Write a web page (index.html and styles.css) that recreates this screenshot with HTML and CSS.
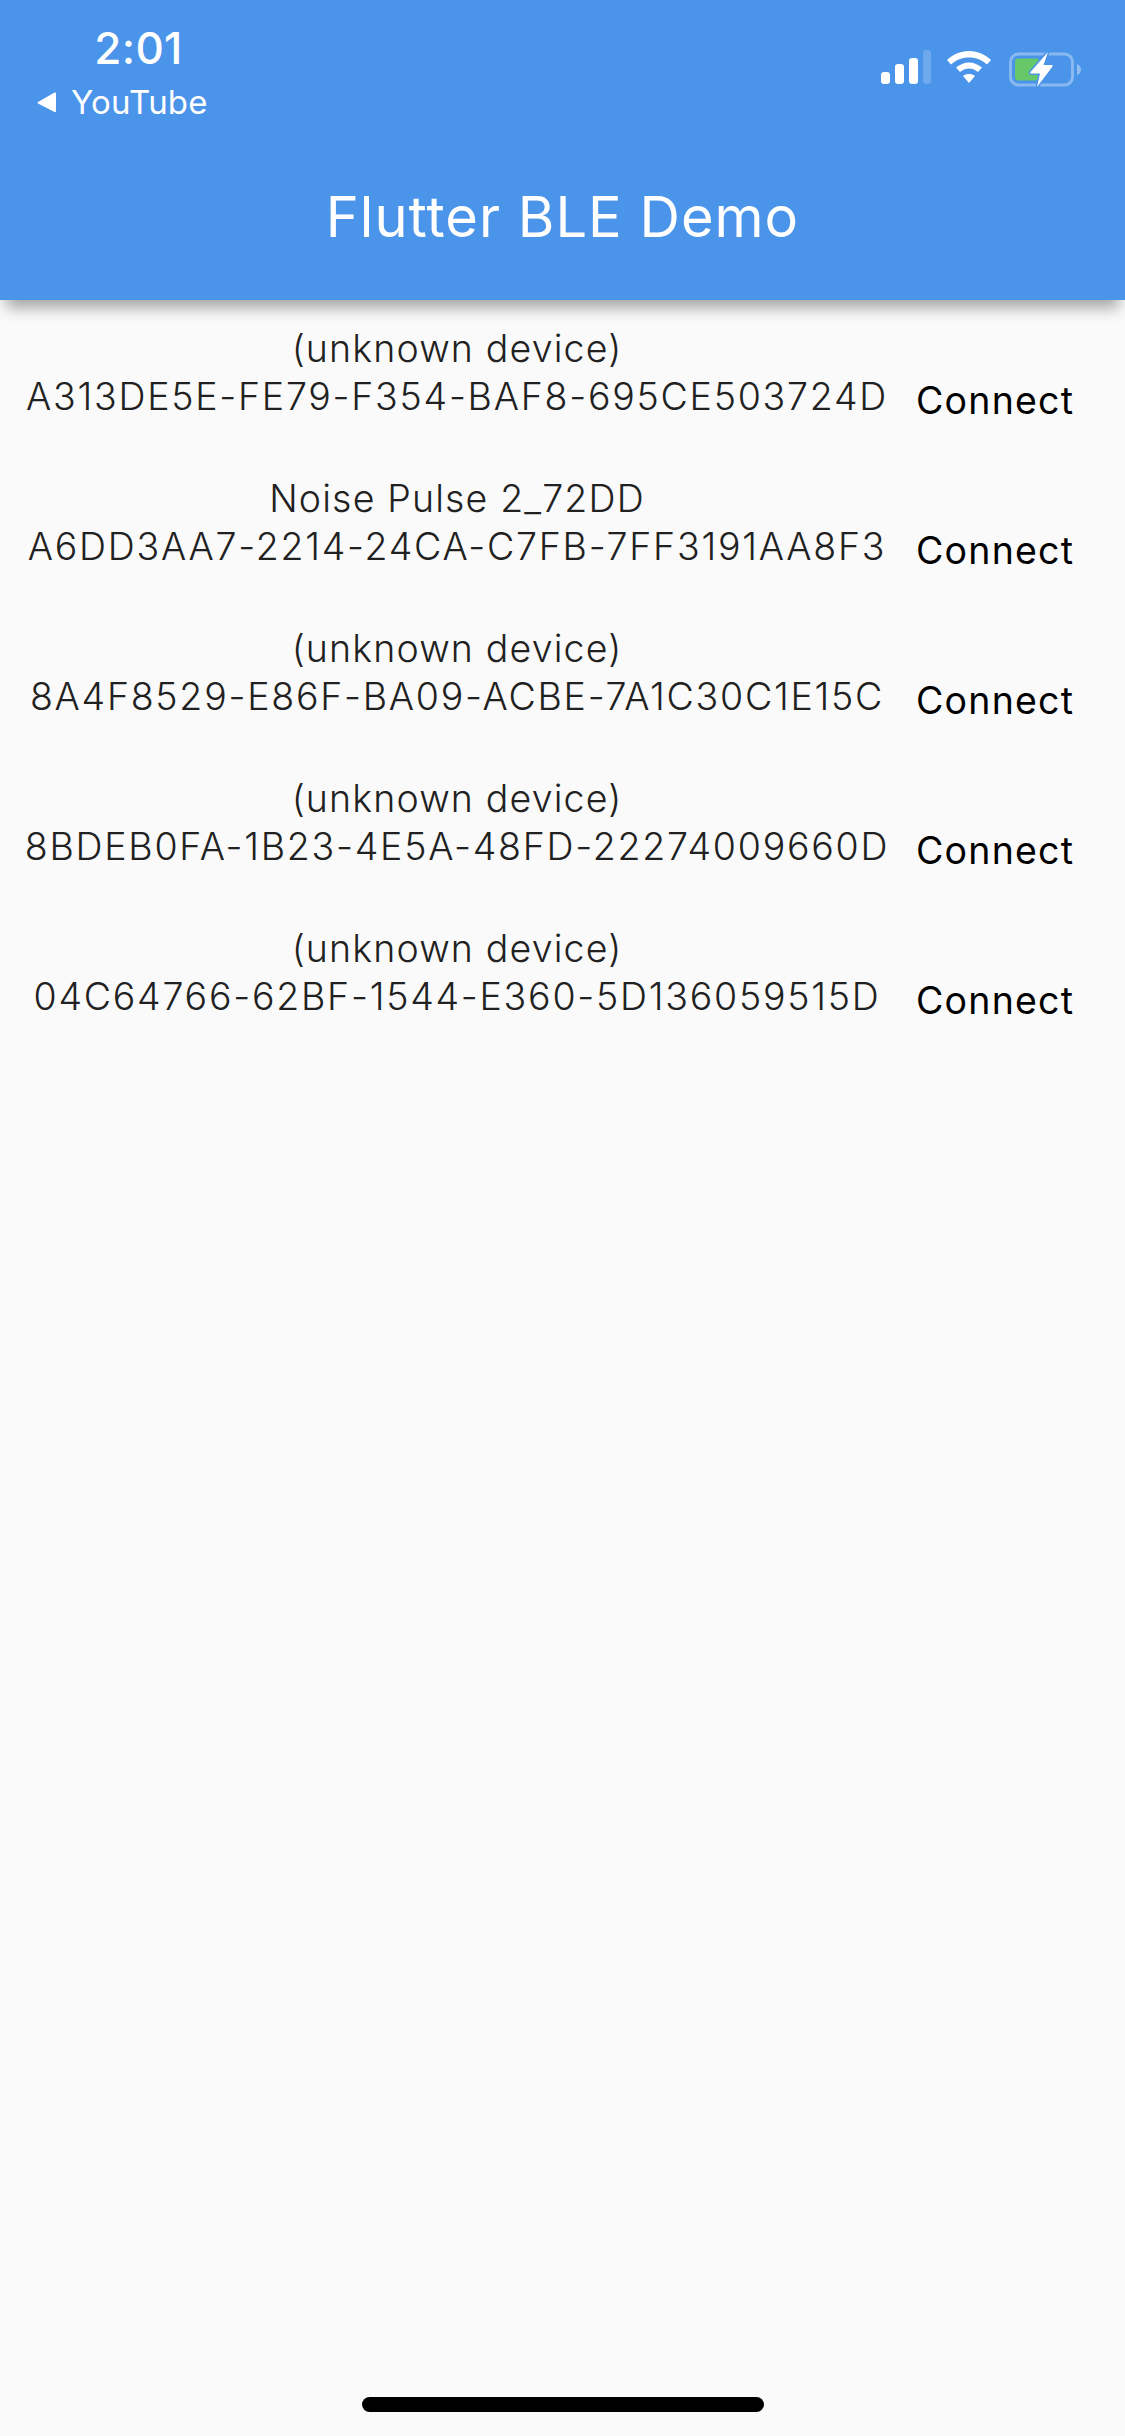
FILE: index.html
```html
<!DOCTYPE html>
<html lang="en">
<head>
<meta charset="utf-8">
<title>Flutter BLE Demo</title>
<link rel="stylesheet" href="styles.css">
</head>
<body>
<div class="screen">
  <header class="appbar">
    <div class="status">
      <div class="status-left">
        <div class="time">2:01</div>
        <div class="back"><svg class="back-arrow" viewBox="0 0 22 22" width="22" height="22"><path d="M20 2.500 L20 20 Q20 21.500 18.500 21 L2 12.600 Q1 12 2 11 L18.500 1.600 Q20 1 20 2.500Z" fill="#fff"/></svg><span>YouTube</span></div>
      </div>
      <div class="status-right">
        <svg width="52" height="36" viewBox="0 0 52 36"><rect x="2" y="22" width="9" height="12" rx="3" fill="#fff"/><rect x="16" y="14" width="9" height="20" rx="3" fill="#fff"/><rect x="30" y="8" width="9" height="26" rx="3" fill="#fff"/><rect x="44" y="0" width="8" height="34" rx="3" fill="#fff" fill-opacity=".2"/></svg>
        <svg class="wifi" width="46" height="34" viewBox="0 0 46 34"><path d="M23 1C32 1 39 4.500 45 10L41 14.500C36 10 30 7.500 23 7.500C16 7.500 10 10 5 14.500L1 10C7 4.500 14 1 23 1Z M23 12.500C28 12.500 32 14.500 36 17.500L32 22C29 19.500 26 18.500 23 18.500C20 18.500 17 19.500 14 22L10 17.500C14 14.500 18 12.500 23 12.500Z M23 24C25 24 27 24.500 29 26L23 33L17 26C19 24.500 21 24 23 24Z" fill="#fff"/></svg>
        <svg class="battery" width="74" height="38" viewBox="0 0 74 38"><rect x="1.500" y="4" width="62" height="31" rx="8" fill="none" stroke="#fff" stroke-opacity=".35" stroke-width="3"/><path d="M68 14C71 15 72 17.500 72 19.500C72 21.500 71 24 68 25Z" fill="#fff" fill-opacity=".4"/><rect x="6" y="8.500" width="24" height="22" rx="3" fill="#66c768"/><path d="M39 2 L21.500 22 Q20.500 23.500 22.500 23.500 L31 23.500 L28 37 L43.500 16.500 Q44.500 15 42.500 15 L34.500 15Z" fill="#fff" stroke="#4a94ea" stroke-width="3" paint-order="stroke"/></svg>
      </div>
    </div>
    <h1 class="title">Flutter BLE Demo</h1>
  </header>
  <main class="list">
    <div class="row"><div class="info"><div>(unknown device)</div><div class="uuid">A313DE5E-FE79-F354-BAF8-695CE503724D</div></div><div class="connect">Connect</div></div>
    <div class="row"><div class="info"><div>Noise Pulse 2_72DD</div><div class="uuid">A6DD3AA7-2214-24CA-C7FB-7FF3191AA8F3</div></div><div class="connect">Connect</div></div>
    <div class="row"><div class="info"><div>(unknown device)</div><div class="uuid">8A4F8529-E86F-BA09-ACBE-7A1C30C1E15C</div></div><div class="connect">Connect</div></div>
    <div class="row"><div class="info"><div>(unknown device)</div><div class="uuid">8BDEB0FA-1B23-4E5A-48FD-22274009660D</div></div><div class="connect">Connect</div></div>
    <div class="row"><div class="info"><div>(unknown device)</div><div class="uuid">04C64766-62BF-1544-E360-5D136059515D</div></div><div class="connect">Connect</div></div>
  </main>
  <div class="home"></div>
</div>
</body>
</html>
```
FILE: styles.css
```css
* { box-sizing: border-box; }
html, body { margin: 0; padding: 0; }
body { width: 1125px; height: 2436px; background: #fafafa; font-family: Inter, "Liberation Sans", sans-serif; overflow: hidden; }
.screen { width: 1125px; height: 2436px; display: flex; flex-direction: column; }
.appbar { height: 300px; background: #4a94ea; color: #fff; box-shadow: 0 14px 14px -6px rgba(0,0,0,.34); flex: none; display: flex; flex-direction: column; position: relative; }
.status { height: 187px; display: flex; justify-content: space-between; align-items: flex-start; }
.status-left { width: 210px; margin-left: 36px; padding-top: 22px; display: flex; flex-direction: column; }
.time { font-size: 44px; line-height: 52px; font-weight: 500; text-align: center; margin-left: -5px; letter-spacing: .3px; }
.back { display: flex; align-items: center; font-size: 33px; line-height: 40px; margin-top: 8px; gap: 13px; letter-spacing: .2px; }
.back-arrow { flex: none; }
.status-right { display: flex; align-items: flex-start; padding-top: 50px; padding-right: 42px; }
.wifi { margin-left: 15px; }
.battery { margin-left: 17px; }
.title { margin: 0; font-size: 56px; line-height: 60px; font-weight: 400; text-align: center; letter-spacing: 1px; }
.list { display: flex; flex-direction: column; padding-top: 25px; flex: 1; }
.row { height: 150px; display: flex; align-items: flex-start; padding-left: 24px; }
.info { width: 866px; text-align: center; font-size: 37.500px; line-height: 48px; color: #212121; font-weight: 350; letter-spacing: 1.150px; white-space: nowrap; }
.uuid { letter-spacing: 1.750px; }
.connect { margin-left: 26px; margin-top: 52px; font-size: 37.500px; line-height: 48px; color: #000; font-weight: 430; letter-spacing: 1.200px; }
.home { width: 402px; height: 15px; background: #000; border-radius: 8px; margin: 0 auto 24px; flex: none; }
```
